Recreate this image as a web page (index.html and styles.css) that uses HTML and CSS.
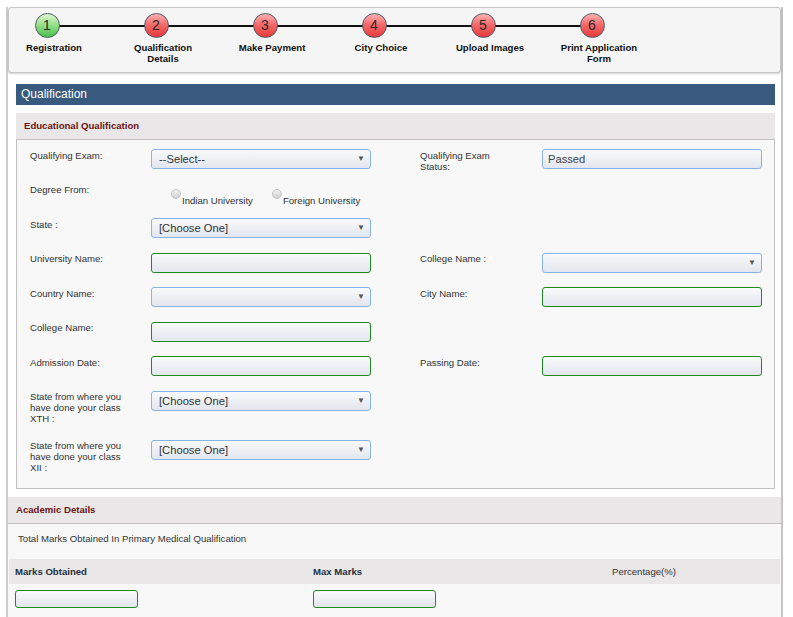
FILE: index.html
```html
<!DOCTYPE html>
<html>
<head>
<meta charset="utf-8">
<title>Qualification</title>
<link rel="stylesheet" href="styles.css">
</head>
<body>
<div class="page">
  <div class="steps">
    <div class="track">
      <div class="step done"><span class="dot">1</span><span class="step-lbl">Registration</span></div>
      <div class="step"><span class="dot">2</span><span class="step-lbl">Qualification Details</span></div>
      <div class="step"><span class="dot">3</span><span class="step-lbl">Make Payment</span></div>
      <div class="step"><span class="dot">4</span><span class="step-lbl">City Choice</span></div>
      <div class="step"><span class="dot">5</span><span class="step-lbl">Upload Images</span></div>
      <div class="step"><span class="dot">6</span><span class="step-lbl">Print Application Form</span></div>
    </div>
  </div>

  <div class="content">
    <div class="title">Qualification</div>
    <div class="panel">
      <div class="panel-head">Educational Qualification</div>
      <div class="panel-body">
        <div class="row">
          <div class="lbl req">Qualifying Exam:</div>
          <span class="sel"><select class="field blue"><option>--Select--</option></select></span>
          <div class="lbl lbl-r req">Qualifying Exam Status:</div>
          <input class="field blue inp" value="Passed">
        </div>
        <div class="row">
          <div class="lbl req">Degree From:</div>
          <div class="radios">
            <label class="opt"><input type="radio" name="deg"><span>Indian University</span></label>
            <label class="opt"><input type="radio" name="deg"><span>Foreign University</span></label>
          </div>
        </div>
        <div class="row">
          <div class="lbl req">State :</div>
          <span class="sel"><select class="field blue"><option>[Choose One]</option></select></span>
        </div>
        <div class="row">
          <div class="lbl req">University Name:</div>
          <input class="field green">
          <div class="lbl lbl-r req">College Name :</div>
          <span class="sel"><select class="field blue"><option></option></select></span>
        </div>
        <div class="row">
          <div class="lbl">Country Name:</div>
          <span class="sel"><select class="field blue"><option></option></select></span>
          <div class="lbl lbl-r">City Name:</div>
          <input class="field green">
        </div>
        <div class="row">
          <div class="lbl">College Name:</div>
          <input class="field green">
        </div>
        <div class="row">
          <div class="lbl">Admission Date:</div>
          <input class="field green">
          <div class="lbl lbl-r">Passing Date:</div>
          <input class="field green">
        </div>
        <div class="row tall">
          <div class="lbl">State from where you have done your class XTH :</div>
          <span class="sel"><select class="field blue"><option>[Choose One]</option></select></span>
        </div>
        <div class="row tall last">
          <div class="lbl">State from where you have done your class XII :</div>
          <span class="sel"><select class="field blue"><option>[Choose One]</option></select></span>
        </div>
      </div>
    </div>
  </div>

  <div class="academic">
    <div class="acad-head">Academic Details</div>
    <div class="acad-body">
      <div class="acad-note">Total Marks Obtained In Primary Medical Qualification</div>
      <div class="marks-head">
        <div class="mh bold">Marks Obtained</div>
        <div class="mh bold">Max Marks</div>
        <div class="mh">Percentage(%)</div>
      </div>
      <div class="marks-row">
        <div class="mc"><input class="small green"></div>
        <div class="mc"><input class="small green"></div>
        <div class="mc"></div>
      </div>
    </div>
  </div>
</div>
</body>
</html>
```

FILE: styles.css
```css
html, body {
  margin: 0;
  padding: 0;
  background: #ffffff;
  font-family: "Liberation Sans", Arial, sans-serif;
}

.page {
  margin: 7px 0 0 6px;
  width: 777px;
  box-sizing: border-box;
  border-left: 2px solid #cfcfcf;
  border-right: 2px solid #c4c4c4;
  min-height: 610px;
}

/* ---------- stepper ---------- */
.steps {
  background: #f5f5f5;
  border: 1px solid #c6c6c6;
  border-radius: 3px;
  box-shadow: 0 1px 2px rgba(0, 0, 0, 0.18);
  padding: 5px 0 8px 0;
}

.track {
  position: relative;
  display: flex;
  gap: 19px;
}

.track::before {
  content: "";
  position: absolute;
  left: 38px;
  top: 12px;
  width: 545px;
  height: 1.5px;
  background: #111;
}

.step {
  width: 90px;
  display: flex;
  flex-direction: column;
  align-items: flex-start;
}

.dot {
  position: relative;
  width: 25px;
  height: 25px;
  box-sizing: border-box;
  margin-left: 25.5px;
  border-radius: 50%;
  border: 1px solid #4f5d6b;
  background: linear-gradient(#ffb3b3 0%, #f56b6b 45%, #e83a3a 100%);
  color: #2a2a2a;
  font-size: 14px;
  line-height: 23px;
  text-align: center;
}

.step.done .dot {
  background: linear-gradient(#e2f7d6 0%, #9ae08a 45%, #4cbf4c 100%);
}

.step-lbl {
  align-self: stretch;
  margin-top: 4px;
  font-size: 9.6px;
  font-weight: bold;
  line-height: 11px;
  color: #111;
  text-align: center;
}

/* ---------- content ---------- */
.content {
  padding: 11px 6px 0 8px;
}

.title {
  background: #375a7e;
  color: #ffffff;
  font-size: 12px;
  height: 21px;
  line-height: 21px;
  padding-left: 5px;
}

.panel {
  margin-top: 8px;
}

.panel-head {
  background: #e9e7e7;
  border-bottom: 1px solid #c3c3c3;
  height: 26px;
  line-height: 26px;
  padding-left: 8px;
  font-size: 9.6px;
  font-weight: bold;
  color: #6b1414;
}

.panel-body {
  background: #f8f8f8;
  border: 1px solid #c0c0c0;
  border-top: none;
  padding: 9px 0 14px 13px;
}

.row {
  display: grid;
  grid-template-columns: 121px 220px 171px 220px;
  align-items: start;
  height: 20px;
  margin-bottom: 14.5px;
}

.row.tall {
  height: 34.5px;
}

.row.last {
  margin-bottom: 0;
}

.lbl {
  font-size: 9.6px;
  line-height: 11px;
  color: #333;
  padding-top: 0.5px;
  padding-right: 21px;
}

.lbl-r {
  padding-left: 49px;
  padding-right: 20px;
}

.req::after {
  content: " *";
  color: #ffffff;
}

.field {
  display: block;
  width: 220px;
  height: 20px;
  box-sizing: border-box;
  margin: 0;
  border: 1px solid #88b3e6;
  border-radius: 3px;
  background: linear-gradient(#f9fafb, #e2e6ee);
  font-family: "Liberation Sans", Arial, sans-serif;
  font-size: 11.2px;
  color: #333;
  padding: 0 0 0 8px;
  outline: none;
}

.field.green {
  border-color: #1f8a1f;
}

.inp {
  padding-left: 5px;
  color: #444;
}

select.field {
  -webkit-appearance: none;
  appearance: none;
  padding-left: 7px;
}

.sel {
  position: relative;
  display: block;
  width: 220px;
}

.sel::after {
  content: "\25BC";
  position: absolute;
  right: 6px;
  top: 5px;
  font-size: 8px;
  line-height: 10px;
  color: #555;
  pointer-events: none;
}

.radios {
  display: flex;
  padding-left: 20px;
  height: 20px;
  white-space: nowrap;
}

.opt {
  display: flex;
  align-items: flex-start;
  margin-right: 19px;
  flex: none;
}

.opt input {
  -webkit-appearance: none;
  appearance: none;
  width: 10px;
  height: 10px;
  margin: 5px 1px 0 0;
  border-radius: 50%;
  border: 1px solid #c2c2c2;
  background: linear-gradient(#f2f2f2, #d2d2d2);
  box-sizing: border-box;
  flex: none;
}

.opt span {
  margin-top: 11px;
  font-size: 9.6px;
  line-height: 11px;
  color: #333;
}

/* ---------- academic ---------- */
.academic {
  margin-top: 8px;
}

.acad-head {
  background: #e9e7e7;
  border-bottom: 1px solid #c3c3c3;
  height: 26px;
  line-height: 26px;
  padding-left: 8px;
  font-size: 9.6px;
  font-weight: bold;
  color: #6b1414;
}

.acad-body {
  background: #f8f8f8;
  padding: 8.5px 0 10px 0;
}

.acad-note {
  padding-left: 10px;
  font-size: 9.6px;
  line-height: 11px;
  color: #333;
}

.marks-head {
  margin: 15.5px 1px 0 1px;
  background: #e9e7e7;
  height: 25px;
  display: grid;
  grid-template-columns: 298px 299px 1fr;
  align-items: center;
}

.mh {
  padding-left: 6px;
  font-size: 9.6px;
  color: #333;
}

.mh.bold {
  font-weight: bold;
  color: #23303d;
}

.marks-row {
  margin: 6px 1px 0 1px;
  display: grid;
  grid-template-columns: 298px 299px 1fr;
}

.mc {
  padding-left: 6px;
}

.small {
  display: block;
  width: 123px;
  height: 18px;
  box-sizing: border-box;
  margin: 0;
  border: 1px solid #1f8a1f;
  border-radius: 3px;
  background: linear-gradient(#f9fafb, #e2e6ee);
  outline: none;
}
```
